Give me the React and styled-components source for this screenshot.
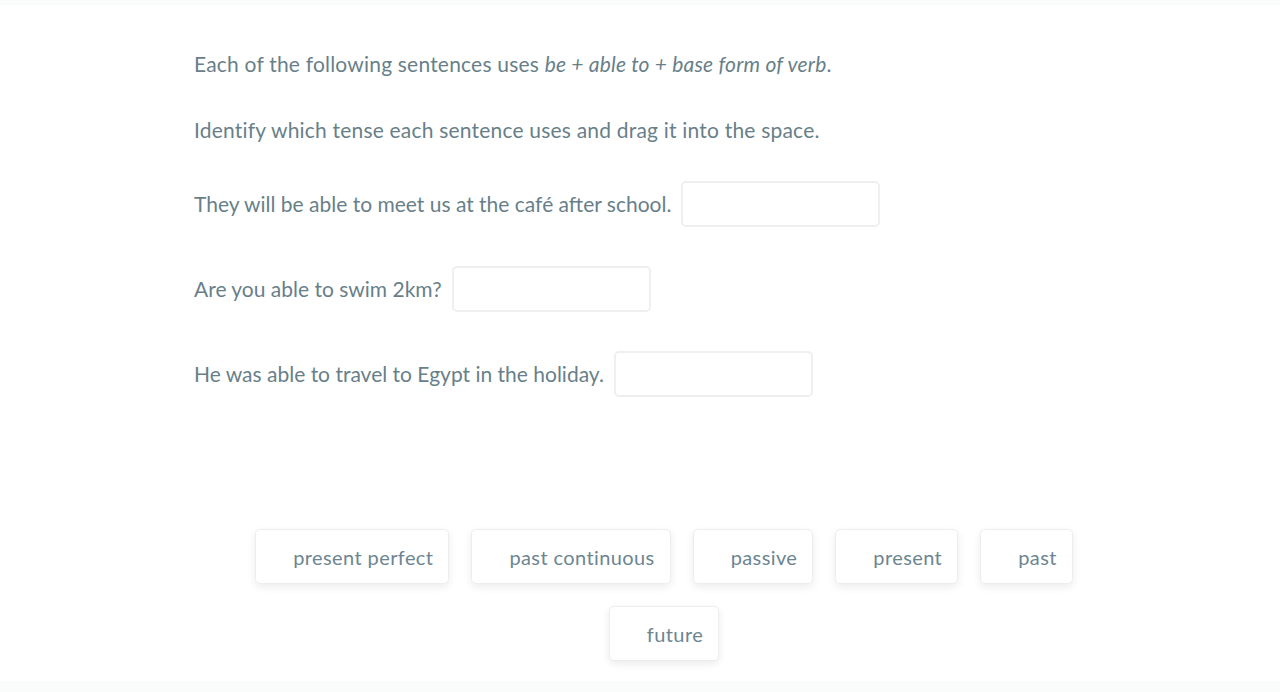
import React from "react";
import styled, { createGlobalStyle } from "styled-components";

const Global = createGlobalStyle`
  html, body { margin: 0; padding: 0; }
  body {
    background: #fafcfc;
    font-family: Lato, "Open Sans", sans-serif;
    color: #687f89;
  }
`;

const Page = styled.div`
  padding: 5px 0 11px;
`;

const Panel = styled.main`
  background: #ffffff;
  height: 676px;
  box-sizing: border-box;
  padding: 44px 0 0 194px;
`;

const Para = styled.p`
  margin: 0 0 ${(p) => p.$mb || 0}px;
  font-size: 21px;
  letter-spacing: 0.2px;
  line-height: 30px;
`;

const Question = styled.div`
  display: flex;
  align-items: center;
  gap: 10px;
  font-size: 21px;
  letter-spacing: 0;
  height: 45px;
  margin-bottom: 40px;
`;

const DropBox = styled.div`
  width: 199px;
  height: 46px;
  flex: none;
  box-sizing: border-box;
  border: 2px solid #eef0f0;
  border-radius: 5px;
  background: #fff;
`;

const Bank = styled.div`
  display: flex;
  flex-wrap: wrap;
  justify-content: center;
  gap: 22px;
  width: 860px;
  margin: 133px 0 0 0;
  padding-left: 40px;
`;

const Chip = styled.div`
  height: 55px;
  box-sizing: border-box;
  display: flex;
  align-items: center;
  padding: 0 15px 0 37px;
  font-size: 20px;
  letter-spacing: 0.4px;
  border: 1px solid #eceeee;
  border-radius: 5px;
  background: #fff;
  box-shadow: 0 3px 8px rgba(0, 0, 0, 0.08);
  color: #6c8591;
`;

const questions = [
  "They will be able to meet us at the café after school.",
  "Are you able to swim 2km?",
  "He was able to travel to Egypt in the holiday.",
];

const chips = ["present perfect", "past continuous", "passive", "present", "past", "future"];

export default function App() {
  return (
    <>
      <Global />
      <Page>
        <Panel>
          <Para $mb={36}>
            Each of the following sentences uses <em>be + able to + base form of verb</em>.
          </Para>
          <Para $mb={36}>Identify which tense each sentence uses and drag it into the space.</Para>
          {questions.map((q) => (
            <Question key={q}>
              <span>{q}</span>
              <DropBox />
            </Question>
          ))}
          <Bank>
            {chips.map((c) => (
              <Chip key={c}>{c}</Chip>
            ))}
          </Bank>
        </Panel>
      </Page>
    </>
  );
}
